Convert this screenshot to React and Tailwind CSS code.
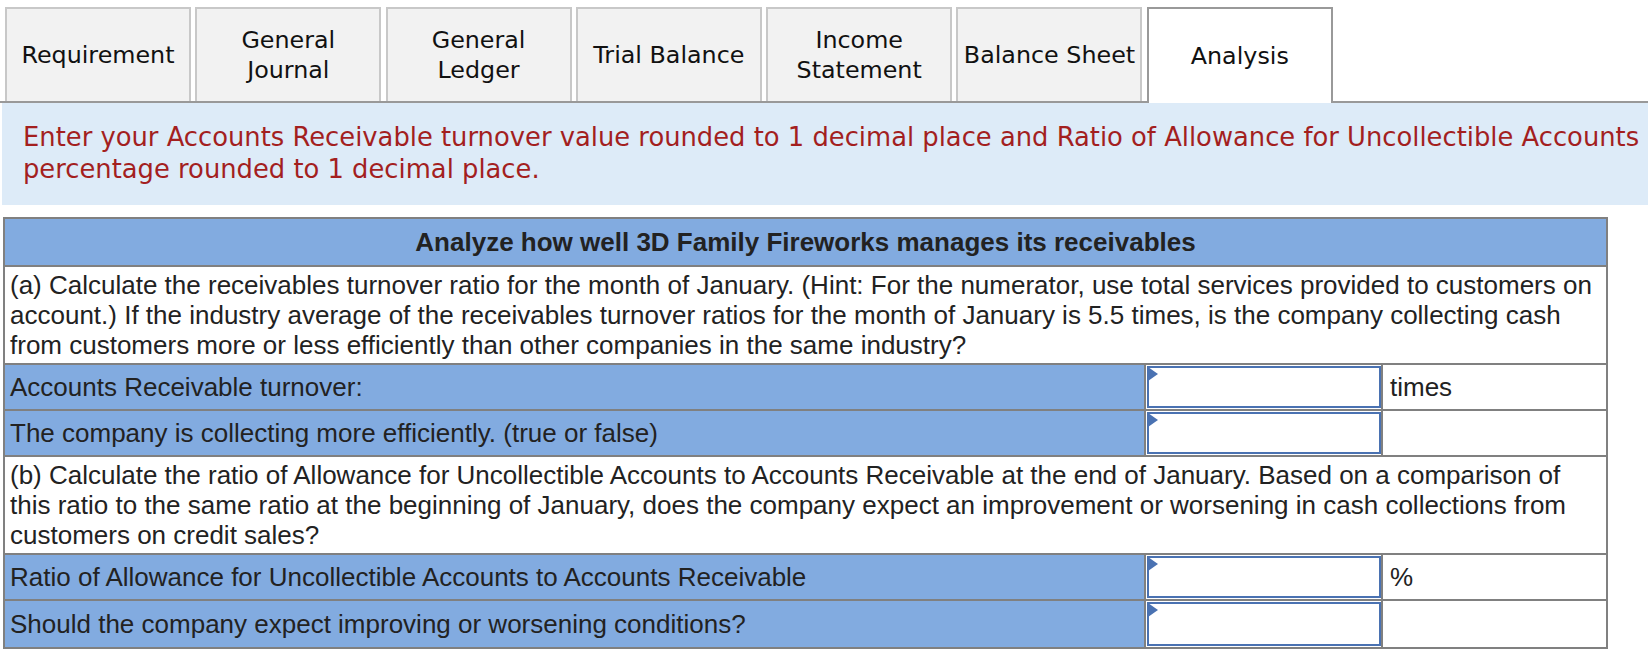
import React from 'react';

const tabs = [
  { id: 'req', lines: ['Requirement'] },
  { id: 'gj', lines: ['General', 'Journal'] },
  { id: 'gl', lines: ['General', 'Ledger'] },
  { id: 'tb', lines: ['Trial Balance'] },
  { id: 'is', lines: ['Income', 'Statement'] },
  { id: 'bs', lines: ['Balance Sheet'] },
  { id: 'an', lines: ['Analysis'] },
];

const InputCell = () => (
  <div className="relative w-[237px] border-r-2 border-[#808080] pl-[1px] py-[1px]">
    <input
      type="text"
      className="w-full h-full border-2 border-[#4a72b2] bg-white outline-none px-2"
    />
    <svg className="absolute left-[2px] top-[2px]" width="10" height="14" viewBox="0 0 10 14">
      <polygon points="0,0 10,7 0,14" fill="#4a72b2" />
    </svg>
  </div>
);

const AnswerRow = ({ label, unit }) => (
  <div className="flex h-[46px] border-b-2 border-[#808080] last:border-b-0">
    <div className="w-[1141px] bg-[#82abe0] border-r-2 border-[#808080] pl-[5px] flex items-center">
      {label}
    </div>
    <InputCell />
    <div className="flex-1 bg-white pl-[7px] flex items-center">{unit}</div>
  </div>
);

const TextRow = ({ lines }) => (
  <div className="bg-white border-b-2 border-[#808080] pl-[5px] pt-[3px] pb-[3px] leading-[30px] whitespace-nowrap">
    {lines.map((l, i) => (
      <div key={i}>{l}</div>
    ))}
  </div>
);

export default function App() {
  const activeTab = 'an';

  return (
    <div className="w-[1648px] h-[660px] overflow-hidden bg-white">
      {/* Tabs */}
      <div className="flex items-end gap-[4.3px] pl-[5px] pt-[7px] border-b-2 border-[#999999] font-['DejaVu_Sans',Verdana,sans-serif] text-[23.8px] leading-[30px] text-[#111]">
        {tabs.map(t => (
          <div
            key={t.id}
            className={`w-[186px] flex flex-col items-center justify-center text-center border-2 border-b-0 ${
              t.id === activeTab
                ? 'h-[96px] -mb-[2px] bg-white border-[#999999]'
                : 'h-[94px] bg-[#f2f2f2] border-[#c8c8c8]'
            }`}
          >
            {t.lines.map(l => (
              <span key={l}>{l}</span>
            ))}
          </div>
        ))}
      </div>

      {/* Instructions */}
      <div className="ml-[2px] w-[1720px] bg-[#ddebf8] pl-[21px] pt-[18px] pb-[20px] font-['DejaVu_Sans',Verdana,sans-serif] text-[25.8px] leading-[32px] text-[#a31f1f] whitespace-nowrap">
        Enter your Accounts Receivable turnover value rounded to 1 decimal place and Ratio of Allowance for Uncollectible Accounts
        <br />
        percentage rounded to 1 decimal place.
      </div>

      {/* Analysis table */}
      <div className="mt-[12px] ml-[3px] w-[1605px] border-2 border-[#808080] font-['Liberation_Sans',Arial,sans-serif] text-[26px] text-[#222]">
        <div className="h-[48px] bg-[#82abe0] border-b-2 border-[#808080] flex items-center justify-center font-bold">
          Analyze how well 3D Family Fireworks manages its receivables
        </div>
        <TextRow
          lines={[
            '(a) Calculate the receivables turnover ratio for the month of January. (Hint: For the numerator, use total services provided to customers on',
            'account.) If the industry average of the receivables turnover ratios for the month of January is 5.5 times, is the company collecting cash',
            'from customers more or less efficiently than other companies in the same industry?',
          ]}
        />
        <AnswerRow label="Accounts Receivable turnover:" unit="times" />
        <AnswerRow label="The company is collecting more efficiently. (true or false)" unit="" />
        <TextRow
          lines={[
            '(b) Calculate the ratio of Allowance for Uncollectible Accounts to Accounts Receivable at the end of January. Based on a comparison of',
            'this ratio to the same ratio at the beginning of January, does the company expect an improvement or worsening in cash collections from',
            'customers on credit sales?',
          ]}
        />
        <AnswerRow label="Ratio of Allowance for Uncollectible Accounts to Accounts Receivable" unit="%" />
        <AnswerRow label="Should the company expect improving or worsening conditions?" unit="" />
      </div>
    </div>
  );
}
